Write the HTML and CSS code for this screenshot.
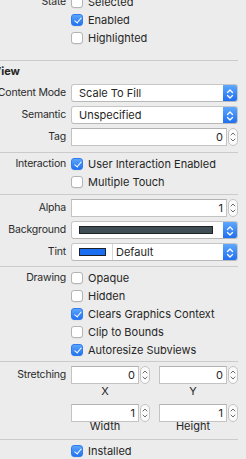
FILE: index.html
```html
<!DOCTYPE html>
<html>
<head>
<meta charset="utf-8">
<link rel="stylesheet" href="styles.css">
</head>
<body>
<div class="panel">
  <section class="sec s-state">
    <div class="row"><div class="lbl">State</div><div class="ctl"><span class="chk"></span><span class="ct">Selected</span></div></div>
    <div class="row"><div class="lbl"></div><div class="ctl"><span class="chk on"></span><span class="ct">Enabled</span></div></div>
    <div class="row"><div class="lbl"></div><div class="ctl"><span class="chk"></span><span class="ct">Highlighted</span></div></div>
  </section>

  <section class="sec s-view">
    <div class="hdr">View</div>
    <div class="rows4">
      <div class="row"><div class="lbl">Content Mode</div><div class="ctl">
        <div class="popup"><span class="ptext">Scale To Fill</span><span class="pbtn"><svg viewBox="0 0 14 18" width="14" height="18"><path d="M4.5 7.5 L7 5 L9.5 7.5 M4.5 10.5 L7 13 L9.5 10.5" fill="none" stroke="#fff" stroke-width="1.3" stroke-linecap="round" stroke-linejoin="round"/></svg></span></div>
      </div></div>
      <div class="row"><div class="lbl">Semantic</div><div class="ctl">
        <div class="popup"><span class="ptext">Unspecified</span><span class="pbtn"><svg viewBox="0 0 14 18" width="14" height="18"><path d="M4.5 7.5 L7 5 L9.5 7.5 M4.5 10.5 L7 13 L9.5 10.5" fill="none" stroke="#fff" stroke-width="1.3" stroke-linecap="round" stroke-linejoin="round"/></svg></span></div>
      </div></div>
      <div class="row"><div class="lbl">Tag</div><div class="ctl">
        <div class="num"><span class="field">0</span><span class="step"><svg viewBox="0 0 10 18" width="10" height="18"><path d="M3 7 L5 5 L7 7 M3 11 L5 13 L7 11" fill="none" stroke="#6e6e6e" stroke-width="1" stroke-linecap="round" stroke-linejoin="round"/></svg></span></div>
      </div></div>
    </div>
  </section>

  <section class="sec s-inter">
    <div class="row"><div class="lbl">Interaction</div><div class="ctl"><span class="chk on"></span><span class="ct">User Interaction Enabled</span></div></div>
    <div class="row"><div class="lbl"></div><div class="ctl"><span class="chk"></span><span class="ct">Multiple Touch</span></div></div>
  </section>

  <section class="sec s-color">
    <div class="rows4">
      <div class="row"><div class="lbl">Alpha</div><div class="ctl">
        <div class="num"><span class="field">1</span><span class="step"><svg viewBox="0 0 10 18" width="10" height="18"><path d="M3 7 L5 5 L7 7 M3 11 L5 13 L7 11" fill="none" stroke="#6e6e6e" stroke-width="1" stroke-linecap="round" stroke-linejoin="round"/></svg></span></div>
      </div></div>
      <div class="row"><div class="lbl">Background</div><div class="ctl">
        <div class="popup"><span class="ptext"><span class="swatch bg"></span></span><span class="pbtn"><svg viewBox="0 0 14 18" width="14" height="18"><path d="M4.5 7.5 L7 5 L9.5 7.5 M4.5 10.5 L7 13 L9.5 10.5" fill="none" stroke="#fff" stroke-width="1.3" stroke-linecap="round" stroke-linejoin="round"/></svg></span></div>
      </div></div>
      <div class="row"><div class="lbl">Tint</div><div class="ctl">
        <div class="popup"><span class="ptext tint"><span class="swatch tintsw"></span><span class="vdiv"></span><span>Default</span></span><span class="pbtn"><svg viewBox="0 0 14 18" width="14" height="18"><path d="M4.5 7.5 L7 5 L9.5 7.5 M4.5 10.5 L7 13 L9.5 10.5" fill="none" stroke="#fff" stroke-width="1.3" stroke-linecap="round" stroke-linejoin="round"/></svg></span></div>
      </div></div>
    </div>
  </section>

  <section class="sec s-draw">
    <div class="row"><div class="lbl">Drawing</div><div class="ctl"><span class="chk"></span><span class="ct">Opaque</span></div></div>
    <div class="row"><div class="lbl"></div><div class="ctl"><span class="chk"></span><span class="ct">Hidden</span></div></div>
    <div class="row"><div class="lbl"></div><div class="ctl"><span class="chk on"></span><span class="ct">Clears Graphics Context</span></div></div>
    <div class="row"><div class="lbl"></div><div class="ctl"><span class="chk"></span><span class="ct">Clip to Bounds</span></div></div>
    <div class="row"><div class="lbl"></div><div class="ctl"><span class="chk on"></span><span class="ct">Autoresize Subviews</span></div></div>
  </section>

  <section class="sec s-stretch">
    <div class="row"><div class="lbl">Stretching</div><div class="ctl pair">
      <div class="num"><span class="field">0</span><span class="step"><svg viewBox="0 0 10 18" width="10" height="18"><path d="M3 7 L5 5 L7 7 M3 11 L5 13 L7 11" fill="none" stroke="#6e6e6e" stroke-width="1" stroke-linecap="round" stroke-linejoin="round"/></svg></span></div>
      <div class="num"><span class="field">0</span><span class="step"><svg viewBox="0 0 10 18" width="10" height="18"><path d="M3 7 L5 5 L7 7 M3 11 L5 13 L7 11" fill="none" stroke="#6e6e6e" stroke-width="1" stroke-linecap="round" stroke-linejoin="round"/></svg></span></div>
    </div></div>
    <div class="caprow cap1"><div class="lbl"></div><div class="ctl pair"><span class="cap">X</span><span class="cap">Y</span></div></div>
    <div class="row"><div class="lbl"></div><div class="ctl pair">
      <div class="num"><span class="field">1</span><span class="step"><svg viewBox="0 0 10 18" width="10" height="18"><path d="M3 7 L5 5 L7 7 M3 11 L5 13 L7 11" fill="none" stroke="#6e6e6e" stroke-width="1" stroke-linecap="round" stroke-linejoin="round"/></svg></span></div>
      <div class="num"><span class="field">1</span><span class="step"><svg viewBox="0 0 10 18" width="10" height="18"><path d="M3 7 L5 5 L7 7 M3 11 L5 13 L7 11" fill="none" stroke="#6e6e6e" stroke-width="1" stroke-linecap="round" stroke-linejoin="round"/></svg></span></div>
    </div></div>
    <div class="caprow cap2"><div class="lbl"></div><div class="ctl pair"><span class="cap">Width</span><span class="cap">Height</span></div></div>
  </section>

  <section class="sec s-inst">
    <div class="row"><div class="lbl"></div><div class="ctl"><span class="chk on"></span><span class="ct">Installed</span></div></div>
  </section>
</div>
</body>
</html>
```

FILE: styles.css
```css
html, body {
  margin: 0;
  padding: 0;
  background: #ececec;
  overflow: hidden;
}
body {
  width: 246px;
  height: 459px;
  font-family: "Inter", "Liberation Sans", sans-serif;
  font-size: 11px;
  color: #262626;
}
.panel {
  width: 246px;
  margin-left: -8px;
  margin-top: -7px;
}
.sec {
  border-top: 1px solid #cbcbcb;
}
.s-state { border-top: none; padding-bottom: 13px; }
.s-view { padding: 3px 0 6px; }
.s-inter { padding: 2px 0 3px; }
.s-color { padding: 4px 0 5px; }
.s-draw { padding: 2px 0 2px; }
.s-stretch { padding: 4px 0 8px; }
.s-inst { padding: 2px 0 0; }

.hdr {
  font-weight: 700;
  height: 14px;
  line-height: 14px;
  padding-left: 1px;
  margin-bottom: 6px;
}
.rows4 {
  display: flex;
  flex-direction: column;
  gap: 4px;
}
.row, .caprow {
  display: grid;
  grid-template-columns: 74px 167px;
  column-gap: 5px;
  align-items: center;
  height: 18px;
}
.lbl {
  text-align: right;
  white-space: nowrap;
  line-height: 18px;
  font-size: 10.5px;
  letter-spacing: -0.2px;
  color: #2a2a2a;
}
.ctl {
  display: flex;
  align-items: center;
  min-width: 0;
}
.chk {
  width: 12px;
  height: 12px;
  box-sizing: border-box;
  border: 1px solid #b4b4b4;
  border-radius: 3px;
  background: #fff;
  box-shadow: 0 0.5px 0.5px rgba(0,0,0,0.08);
  flex: none;
  position: relative;
}
.chk.on {
  border-color: #2f7bef;
  background: linear-gradient(#5aa6fd, #2273f0);
}
.chk.on::after {
  content: "";
  position: absolute;
  left: 3.5px;
  top: 1px;
  width: 3px;
  height: 6px;
  border: solid #fff;
  border-width: 0 1.6px 1.6px 0;
  transform: rotate(40deg);
}
.ct {
  margin-left: 5px;
  white-space: nowrap;
}
.popup {
  flex: 1;
  height: 18px;
  box-sizing: border-box;
  display: flex;
  background: #fff;
  border: 1px solid #c6c6c6;
  border-bottom-color: #b8b8b8;
  border-radius: 3px;
  overflow: hidden;
}
.ptext {
  flex: 1;
  display: flex;
  align-items: center;
  padding-left: 7px;
  white-space: nowrap;
}
.pbtn {
  width: 14px;
  flex: none;
  background: linear-gradient(#5ea8fd, #1f6ff0);
  display: flex;
}
.swatch {
  display: block;
  height: 8px;
  box-sizing: border-box;
  border: 1px solid #1e2226;
}
.swatch.bg {
  width: 134px;
  background: #3f4d55;
}
.swatch.tintsw {
  width: 27px;
  background: #1a6ef2;
}
.vdiv {
  width: 1px;
  align-self: stretch;
  background: #d6d6d6;
  margin: 0 3px 0 6px;
}
.num {
  flex: 1;
  display: flex;
  align-items: center;
  min-width: 0;
}
.field {
  flex: 1;
  height: 18px;
  box-sizing: border-box;
  background: #fff;
  border: 1px solid #c3c3c3;
  border-top-color: #b2b2b2;
  text-align: right;
  padding-right: 3px;
  line-height: 16px;
}
.step {
  width: 10px;
  height: 18px;
  flex: none;
  margin-left: 1px;
  box-sizing: border-box;
  border: 1px solid #c4c4c4;
  border-radius: 5px;
  background: #fafafa;
  display: flex;
  align-items: center;
  justify-content: center;
  overflow: hidden;
}
.step svg { flex: none; }
.pair {
  display: grid;
  grid-template-columns: 79px 79px;
  column-gap: 9px;
}
.caprow { height: 10px; }
.cap1 { margin: 2px 0 8px; }
.cap2 { margin-top: -1px; }
.cap {
  text-align: center;
  padding-right: 11px;
  line-height: 10px;
}
```
